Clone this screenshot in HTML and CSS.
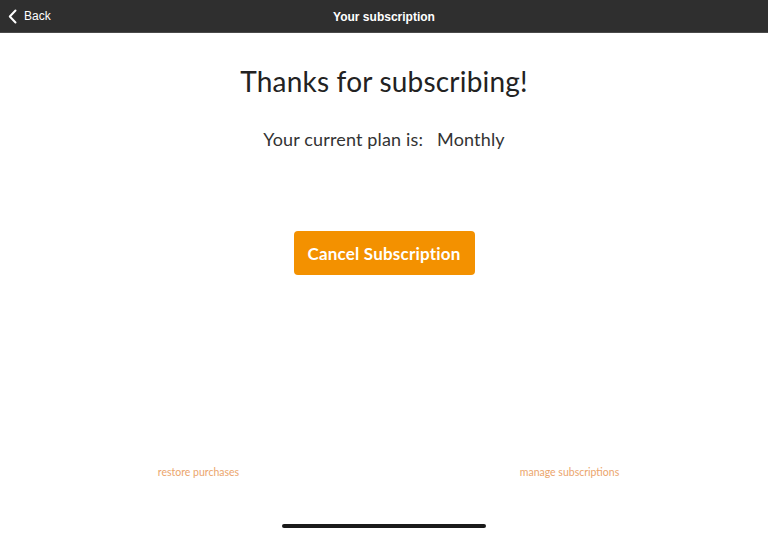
FILE: index.html
```html
<!DOCTYPE html>
<html lang="en">
<head>
<meta charset="utf-8">
<title>Your subscription</title>
<link rel="stylesheet" href="styles.css">
</head>
<body>
<div class="screen">
  <header class="navbar">
    <a class="back" href="#">
      <svg class="chevron" width="9" height="15" viewBox="0 0 9 15" aria-hidden="true">
        <path d="M7.5 1.5 L1.8 7.5 L7.5 13.5" fill="none" stroke="#ffffff" stroke-width="2" stroke-linecap="round" stroke-linejoin="round"/>
      </svg>
      <span>Back</span>
    </a>
    <h1 class="nav-title">Your subscription</h1>
  </header>

  <main class="content">
    <h2 class="thanks">Thanks for subscribing!</h2>
    <p class="plan">Your current plan is:<span class="plan-name">Monthly</span></p>
    <button class="cancel-btn" type="button">Cancel Subscription</button>
  </main>

  <footer class="links">
    <a href="#" class="link">restore purchases</a>
    <a href="#" class="link">manage subscriptions</a>
  </footer>

  <div class="home-bar-wrap"><div class="home-bar"></div></div>
</div>
</body>
</html>
```

FILE: styles.css
```css
html, body {
  margin: 0;
  padding: 0;
  background: #ffffff;
}

.screen {
  width: 768px;
  height: 534px;
  display: flex;
  flex-direction: column;
  font-family: Lato, "Open Sans", sans-serif;
  overflow: hidden;
}

.navbar {
  position: relative;
  height: 32px;
  background: #2f2f2f;
  border-bottom: 1px solid #4a4a4a;
  display: flex;
  align-items: center;
  justify-content: center;
  flex-shrink: 0;
}

.back {
  position: absolute;
  left: 8px;
  top: 0;
  height: 32px;
  display: flex;
  align-items: center;
  gap: 7px;
  color: #ffffff;
  text-decoration: none;
  font-family: "Liberation Sans", Arial, sans-serif;
  font-size: 12px;
}

.chevron {
  display: block;
}

.nav-title {
  margin: 1px 0 0;
  color: #ffffff;
  font-family: "Liberation Sans", Arial, sans-serif;
  font-size: 12px;
  font-weight: 700;
}

.content {
  flex: 1;
  display: flex;
  flex-direction: column;
  align-items: center;
}

.thanks {
  margin: 31px 0 0;
  font-size: 28px;
  font-weight: 400;
  color: #222222;
  line-height: 34px;
  letter-spacing: 0.2px;
}

.plan {
  margin: 30px 0 0;
  font-size: 18px;
  color: #333333;
  line-height: 22px;
  letter-spacing: 0.15px;
}

.plan-name {
  margin-left: 14px;
}

.cancel-btn {
  margin-top: 81px;
  width: 181px;
  height: 44px;
  border: none;
  border-radius: 4px;
  background: #f39100;
  color: #ffffff;
  font-family: Lato, "Open Sans", sans-serif;
  font-size: 17px;
  font-weight: 700;
  letter-spacing: 0.2px;
  cursor: pointer;
}

.links {
  display: grid;
  grid-template-columns: 1fr 1fr;
  padding: 0 13px;
  margin-bottom: 46px;
}

.link {
  text-align: center;
  font-size: 10.5px;
  color: #eba56c;
  text-decoration: none;
  line-height: 12px;
}

.home-bar-wrap {
  display: flex;
  justify-content: center;
  padding-bottom: 6px;
}

.home-bar {
  width: 204px;
  height: 4px;
  border-radius: 2px;
  background: #1a1a1a;
}
```
